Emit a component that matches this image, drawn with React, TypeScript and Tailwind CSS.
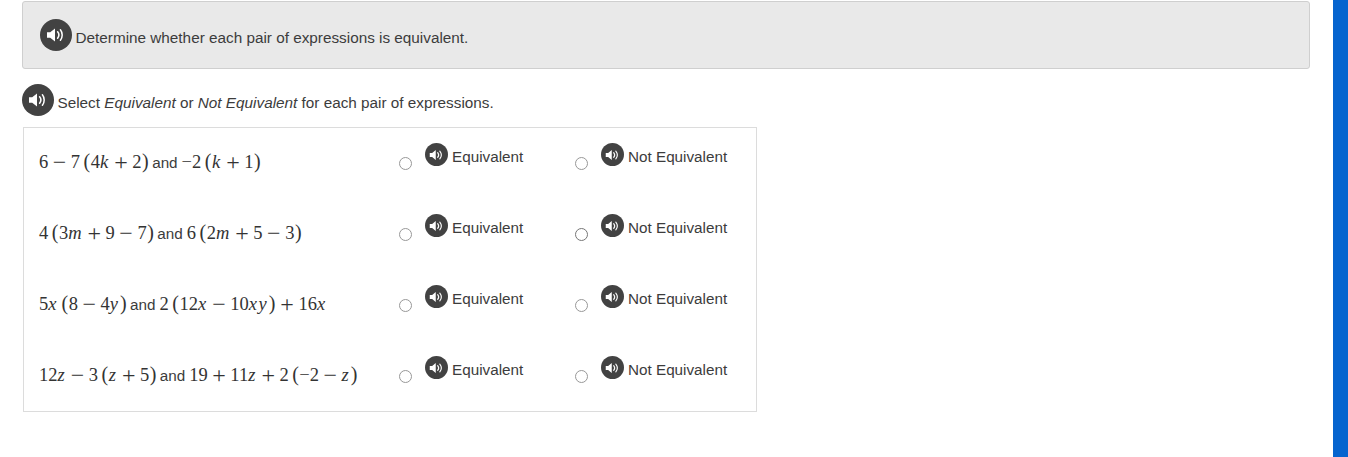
function Speaker({ big }: { big?: boolean }) {
  return (
    <span className={big ? "inline-flex w-8 h-8 shrink-0 items-center justify-center rounded-full bg-[#424242]" : "inline-flex w-[23px] h-[23px] shrink-0 items-center justify-center rounded-full bg-[#424242]"}>
      <svg viewBox="0 0 20 16" className={big ? "w-[20px] h-[16px]" : "w-[15px] h-[12px]"}>
        <path d="M1 5.2h3.2L9 1.4v13.2L4.2 10.8H1z" fill="#fff" />
        <path d="M11.6 4.8c1.5 1.8 1.5 4.6 0 6.4" fill="none" stroke="#fff" strokeWidth="1.5" strokeLinecap="round" />
        <path d="M14.4 2.8c2.4 3 2.4 7.4 0 10.4" fill="none" stroke="#fff" strokeWidth="1.5" strokeLinecap="round" />
      </svg>
    </span>
  );
}

function M({ children }: { children: React.ReactNode }) {
  return <span className="font-['Liberation_Serif',serif] text-[18.5px] text-[#333] whitespace-pre">{children}</span>;
}
function Op({ c }: { c: string }) {
  return <span className="mx-[4.5px] text-[24px] leading-none align-[-2px]">{c}</span>;
}
function V({ c }: { c: string }) {
  return <i className="pr-[1.5px]">{c}</i>;
}
function L() {
  return <span className="ml-[3px] px-[0.5px] text-[20px] leading-none">(</span>;
}
function R() {
  return <span className="px-[0.5px] text-[20px] leading-none">)</span>;
}
function And() {
  return <span className="ml-[3px] mr-[4px]">and</span>;
}

function Option({ label, w, dark }: { label: string; w: string; dark?: boolean }) {
  return (
    <div className={`flex items-start ${w}`}>
      <input type="radio" name="x" className={dark ? "mt-[15px] w-[13px] h-[13px] shrink-0" : "mt-[15px] w-[13px] h-[13px] shrink-0 opacity-75"} />
      <div className="ml-[13px] mt-[1px] flex items-start">
        <Speaker />
        <span className="ml-[4px] mt-[3px] text-[15.25px]">{label}</span>
      </div>
    </div>
  );
}

function Row({ children, dark }: { children: React.ReactNode; dark?: boolean }) {
  return (
    <div className="flex h-[71px] items-start">
      <div className="w-[375px] pl-[15px] pt-[19px] text-[15.25px] leading-[30px] whitespace-nowrap">{children}</div>
      <div className="flex pt-[14px]">
        <Option label="Equivalent" w="w-[176px]" />
        <Option label="Not Equivalent" w="w-[155px]" dark={dark} />
      </div>
    </div>
  );
}

export default function App() {
  return (
    <div className="relative flex h-[457px] overflow-hidden bg-white font-['Liberation_Sans',sans-serif] text-[#3c3c3c]">
      <div className="w-[1333px] pl-[22px] pr-[23px] pt-px">
        <div className="flex h-[68px] items-start rounded-[3px] border border-[#cfcfcf] bg-[#e9e9e9] pl-[17px] pt-[17px]">
          <Speaker big />
          <span className="ml-[3.5px] mt-[8px] text-[15.3px]">Determine whether each pair of expressions is equivalent.</span>
        </div>
        <div className="mt-[15px] flex items-start">
          <Speaker big />
          <span className="ml-[3.5px] mt-[8px] text-[15.3px]">
            Select <em>Equivalent</em> or <em>Not Equivalent</em> for each pair of expressions.
          </span>
        </div>
        <div className="ml-px mt-[11px] h-[285px] w-[734px] border border-[#dcdcdc]">
          <Row><M>6<Op c="−" />7<L />4<V c="k" /><Op c="+" />2<R /></M><And /><M>−2<L /><V c="k" /><Op c="+" />1<R /></M></Row>
          <Row dark><M>4<L />3<V c="m" /><Op c="+" />9<Op c="−" />7<R /></M><And /><M>6<L />2<V c="m" /><Op c="+" />5<Op c="−" />3<R /></M></Row>
          <Row><M>5<V c="x" /><L />8<Op c="−" />4<V c="y" /><R /></M><And /><M>2<L />12<V c="x" /><Op c="−" />10<V c="x" /><V c="y" /><R /><Op c="+" />16<V c="x" /></M></Row>
          <Row><M>12<V c="z" /><Op c="−" />3<L /><V c="z" /><Op c="+" />5<R /></M><And /><M>19<Op c="+" />11<V c="z" /><Op c="+" />2<L />−2<Op c="−" /><V c="z" /><R /></M></Row>
        </div>
      </div>
      <div className="w-[15px] bg-[#0564cf]" />
    </div>
  );
}
